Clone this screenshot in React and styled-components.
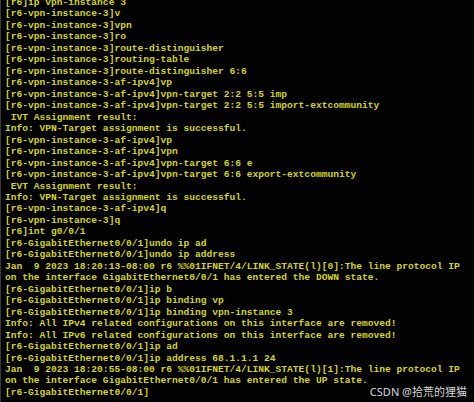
import React from "react";
import styled, { createGlobalStyle } from "styled-components";

const GlobalStyle = createGlobalStyle`
  html, body {
    margin: 0;
    padding: 0;
    background: #000;
  }
`;

const Screen = styled.div`
  position: relative;
  width: 474px;
  height: 402px;
  overflow: hidden;
  background: #020202;
  border-left: 1px solid #3a3a3a;
  box-sizing: border-box;
`;

const Console = styled.pre`
  margin: -3px 0 0 0;
  padding: 0 0 0 4px;
  font-family: "Liberation Mono", "Courier New", monospace;
  font-size: 9.6px;
  font-weight: bold;
  line-height: 11.47px;
  color: #d4d41c;
  white-space: pre;
`;

const Watermark = styled.div`
  position: absolute;
  right: 7px;
  bottom: 3px;
  font-family: "Noto Sans", "Noto Sans CJK SC", sans-serif;
  font-size: 11px;
  color: #d8d8d8;
  text-shadow: 0 0 2px #000;
`;

const lines = [
  "[r6]ip vpn-instance 3",
  "[r6-vpn-instance-3]v",
  "[r6-vpn-instance-3]vpn",
  "[r6-vpn-instance-3]ro",
  "[r6-vpn-instance-3]route-distinguisher",
  "[r6-vpn-instance-3]routing-table",
  "[r6-vpn-instance-3]route-distinguisher 6:6",
  "[r6-vpn-instance-3-af-ipv4]vp",
  "[r6-vpn-instance-3-af-ipv4]vpn-target 2:2 5:5 imp",
  "[r6-vpn-instance-3-af-ipv4]vpn-target 2:2 5:5 import-extcommunity",
  " IVT Assignment result:",
  "Info: VPN-Target assignment is successful.",
  "[r6-vpn-instance-3-af-ipv4]vp",
  "[r6-vpn-instance-3-af-ipv4]vpn",
  "[r6-vpn-instance-3-af-ipv4]vpn-target 6:6 e",
  "[r6-vpn-instance-3-af-ipv4]vpn-target 6:6 export-extcommunity",
  " EVT Assignment result:",
  "Info: VPN-Target assignment is successful.",
  "[r6-vpn-instance-3-af-ipv4]q",
  "[r6-vpn-instance-3]q",
  "[r6]int g0/0/1",
  "[r6-GigabitEthernet0/0/1]undo ip ad",
  "[r6-GigabitEthernet0/0/1]undo ip address",
  "Jan  9 2023 18:20:13-08:00 r6 %%01IFNET/4/LINK_STATE(l)[0]:The line protocol IP",
  "on the interface GigabitEthernet0/0/1 has entered the DOWN state.",
  "[r6-GigabitEthernet0/0/1]ip b",
  "[r6-GigabitEthernet0/0/1]ip binding vp",
  "[r6-GigabitEthernet0/0/1]ip binding vpn-instance 3",
  "Info: All IPv4 related configurations on this interface are removed!",
  "Info: All IPv6 related configurations on this interface are removed!",
  "[r6-GigabitEthernet0/0/1]ip ad",
  "[r6-GigabitEthernet0/0/1]ip address 68.1.1.1 24",
  "Jan  9 2023 18:20:55-08:00 r6 %%01IFNET/4/LINK_STATE(l)[1]:The line protocol IP",
  "on the interface GigabitEthernet0/0/1 has entered the UP state.",
  "[r6-GigabitEthernet0/0/1]",
];

export default function App() {
  return (
    <>
      <GlobalStyle />
      <Screen>
        <Console>{lines.join("\n")}</Console>
        <Watermark>CSDN @拾荒的狸猫</Watermark>
      </Screen>
    </>
  );
}
